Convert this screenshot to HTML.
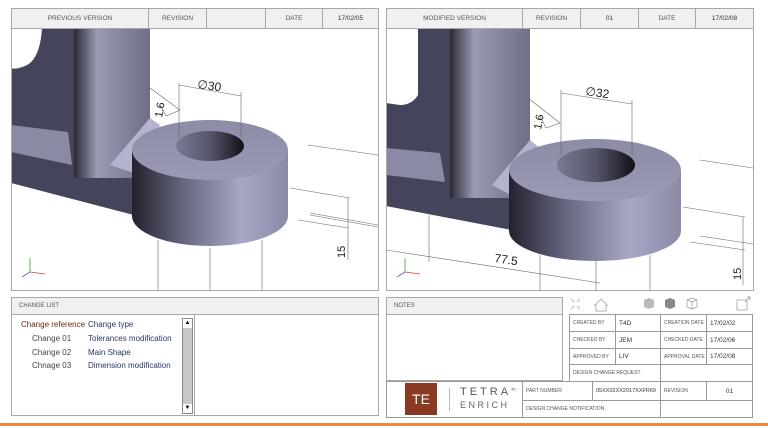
<!DOCTYPE html><html><head><meta charset="utf-8"><style>
*{margin:0;padding:0;box-sizing:border-box}
body{width:768px;height:428px;background:#fff;position:relative;overflow:hidden;font-family:"Liberation Sans",sans-serif}
.a{position:absolute}
.c{position:absolute;border:1px solid #a8a8a8;font-size:6.5px;color:#555;display:flex;align-items:center;justify-content:center;text-transform:uppercase;white-space:nowrap}
.h{background:#f0f0f0}
.t{position:absolute;border:1px solid #999;font-size:5px;color:#555;display:flex;align-items:center;padding-left:3px;white-space:nowrap;overflow:hidden}
.v{font-size:6.5px;color:#333}
.ln{font-size:8px;color:#444;position:absolute;white-space:nowrap}
</style></head><body>
<svg class="a" style="left:0;top:0" width="768" height="428">
<defs>
<linearGradient id="side" x1="0" x2="1"><stop offset="0" stop-color="#22222e"/><stop offset=".35" stop-color="#6a6a84"/><stop offset=".7" stop-color="#a8a8c6"/><stop offset="1" stop-color="#8a8aa6"/></linearGradient>
<linearGradient id="top" x1="0" y1="0" x2="0" y2="1"><stop offset="0" stop-color="#8c8ca6"/><stop offset="1" stop-color="#9a9ab6"/></linearGradient>
<linearGradient id="hole" x1="0" x2="1"><stop offset="0" stop-color="#7a7a96"/><stop offset=".5" stop-color="#55556a"/><stop offset="1" stop-color="#111118"/></linearGradient>
<linearGradient id="arm" x1="0" x2="1"><stop offset="0" stop-color="#2a2a36"/><stop offset=".3" stop-color="#9a9ab4"/><stop offset="1" stop-color="#6e6e86"/></linearGradient>
</defs>
<!-- LEFT -->
<polygon points="11,28 150,28 150,170 145,218 11,183" fill="#44445a"/>
<path d="M11,28 L42,28 Q40,60 25,66 Q15,70 11,68 Z" fill="#fff"/>
<polygon points="11,125 68,132 72,165 11,152" fill="#8a8aa4"/>
<rect x="74" y="28" width="76" height="150" fill="url(#arm)"/>
<polygon points="110,165 150,118 160,125 140,175" fill="#b4b4d0"/>
<rect x="132" y="150" width="156" height="66" fill="url(#side)"/>
<ellipse cx="210" cy="216" rx="78" ry="30" fill="url(#side)"/>
<ellipse cx="210" cy="150" rx="78" ry="30" fill="url(#top)"/>
<ellipse cx="210" cy="146" rx="34" ry="15" fill="url(#hole)"/>
<g stroke="#666" stroke-width=".6" fill="none">
<line x1="179" y1="83" x2="179" y2="137"/><line x1="241" y1="92" x2="241" y2="137"/><line x1="179" y1="85" x2="241" y2="96"/>
<polyline points="150,88 180,110 166,116 160,105"/>
<line x1="308" y1="145" x2="378" y2="155"/><line x1="290" y1="188" x2="350" y2="198"/><line x1="298" y1="220" x2="348" y2="228"/>
<line x1="348" y1="198" x2="348" y2="260"/><line x1="310" y1="213" x2="378" y2="225"/><line x1="310" y1="215" x2="378" y2="227"/>
<line x1="158" y1="240" x2="158" y2="290"/><line x1="210" y1="248" x2="210" y2="290"/><line x1="262" y1="240" x2="262" y2="290"/>
</g>
<text x="197" y="88" font-size="12" fill="#222" transform="rotate(8 197 88)" font-family="Liberation Sans">∅30</text>
<text x="162" y="118" font-size="11" fill="#222" transform="rotate(-80 162 118)">1.6</text>
<text x="345" y="258" font-size="11" fill="#222" transform="rotate(-90 345 258)">15</text>
<g stroke-width=".8"><line x1="30" y1="272" x2="30" y2="258" stroke="#3a3"/><line x1="30" y1="272" x2="45" y2="274" stroke="#c44"/><line x1="30" y1="272" x2="22" y2="277" stroke="#55c"/></g>
<!-- RIGHT -->
<polygon points="386,28 530,28 530,190 522,232 386,206" fill="#44445a"/>
<path d="M386,28 L418,28 L418,95 Q412,105 400,105 L386,103 Z" fill="#fff"/>
<polygon points="386,148 440,153 445,182 386,175" fill="#8a8aa4"/>
<rect x="450" y="28" width="80" height="170" fill="url(#arm)"/>
<polygon points="492,185 530,140 540,148 520,200" fill="#b4b4d0"/>
<rect x="509" y="170" width="172" height="61" fill="url(#side)"/>
<ellipse cx="595" cy="231" rx="86" ry="30" fill="url(#side)"/>
<ellipse cx="595" cy="170" rx="86" ry="31" fill="url(#top)"/>
<ellipse cx="596" cy="165" rx="39" ry="17" fill="url(#hole)"/>
<g stroke="#666" stroke-width=".6" fill="none">
<line x1="561" y1="90" x2="561" y2="155"/><line x1="632" y1="100" x2="632" y2="155"/><line x1="561" y1="93" x2="632" y2="104"/>
<polyline points="528,98 560,123 546,128 540,116"/>
<line x1="700" y1="160" x2="753" y2="168"/><line x1="683" y1="207" x2="745" y2="217"/><line x1="690" y1="242" x2="745" y2="250"/>
<line x1="743" y1="217" x2="743" y2="285"/><line x1="700" y1="236" x2="753" y2="244"/>
<line x1="429" y1="215" x2="429" y2="262"/><line x1="386" y1="250" x2="600" y2="283"/>
<line x1="540" y1="255" x2="540" y2="290"/><line x1="596" y1="260" x2="596" y2="290"/><line x1="650" y1="255" x2="650" y2="290"/>
</g>
<text x="585" y="95" font-size="12" fill="#222" transform="rotate(8 585 95)">∅32</text>
<text x="541" y="130" font-size="11" fill="#222" transform="rotate(-80 541 130)">1.6</text>
<text x="494" y="262" font-size="12" fill="#222" transform="rotate(8 494 262)">77.5</text>
<text x="741" y="280" font-size="11" fill="#222" transform="rotate(-90 741 280)">15</text>
<g stroke-width=".8"><line x1="405" y1="272" x2="405" y2="258" stroke="#3a3"/><line x1="405" y1="272" x2="420" y2="274" stroke="#c44"/><line x1="405" y1="272" x2="397" y2="277" stroke="#55c"/></g>
<!-- toolbar icons -->
<g stroke="#999" stroke-width=".7" fill="none">
<path d="M571,299l3,3M580,299l-3,3M571,309l3,-3M580,309l-3,-3"/>
<path d="M594,306l7,-7l7,7M596,304v7h10v-7"/>
<path d="M687,300l5,-2l5,2v7l-5,2l-5,-2z M687,300l5,2l5,-2M692,302v7"/>
<rect x="737" y="300" width="10" height="10"/><path d="M745,302l5,-5M747,297h3v3"/>
</g>
<path d="M644,300l5,-2l5,2v7l-5,2l-5,-2z" fill="#bbb"/>
<path d="M665,300l5,-2l5,2v7l-5,2l-5,-2z" fill="#888"/>
<rect x="0" y="423" width="768" height="3" fill="#ea8a3c"/>
</svg>
<!-- frames -->
<div class="a" style="left:11px;top:28px;width:368px;height:263px;border:1px solid #aaa;border-top:none"></div>
<div class="a" style="left:386px;top:28px;width:368px;height:263px;border:1px solid #aaa;border-top:none"></div>
<div class="c h" style="left:11px;top:8px;width:138px;height:21px">Previous version</div>
<div class="c h" style="left:148px;top:8px;width:59px;height:21px">Revision</div>
<div class="c h" style="left:206px;top:8px;width:60px;height:21px"></div>
<div class="c h" style="left:265px;top:8px;width:58px;height:21px">Date</div>
<div class="c h" style="left:322px;top:8px;width:57px;height:21px;color:#333">17/02/05</div>
<div class="c h" style="left:386px;top:8px;width:137px;height:21px">Modified version</div>
<div class="c h" style="left:522px;top:8px;width:59px;height:21px">Revision</div>
<div class="c h" style="left:580px;top:8px;width:59px;height:21px;color:#333">01</div>
<div class="c h" style="left:638px;top:8px;width:58px;height:21px">Date</div>
<div class="c h" style="left:695px;top:8px;width:59px;height:21px;color:#333">17/02/08</div>
<!-- change list -->
<div class="a" style="left:11px;top:297px;width:368px;height:119px;border:1px solid #aaa"></div>
<div class="c h" style="left:11px;top:297px;width:368px;height:18px;justify-content:flex-start;padding-left:7px;font-size:6px">Change list</div>
<div class="a" style="left:194px;top:314px;width:1px;height:101px;background:#aaa"></div>
<div class="a" style="left:182px;top:318px;width:11px;height:96px;background:#c8c8c8;border:1px solid #888"></div>
<div class="a" style="left:183px;top:319px;width:9px;height:9px;background:#fff;font-size:6px;text-align:center;line-height:9px">▲</div>
<div class="a" style="left:183px;top:404px;width:9px;height:9px;background:#fff;font-size:6px;text-align:center;line-height:9px">▼</div>
<div class="ln" style="left:21px;top:320px;color:#6a2a14">Change reference</div>
<div class="ln" style="left:88px;top:320px;color:#2a3668">Change type</div>
<div class="ln" style="left:32px;top:334px">Change 01</div><div class="ln" style="left:88px;top:334px;color:#2a3668">Tolerances modification</div>
<div class="ln" style="left:32px;top:348px">Change 02</div><div class="ln" style="left:88px;top:348px;color:#2a3668">Main Shape</div>
<div class="ln" style="left:32px;top:361px">Chnage 03</div><div class="ln" style="left:88px;top:361px;color:#2a3668">Dimension modification</div>
<!-- notes -->
<div class="a" style="left:386px;top:297px;width:177px;height:84px;border:1px solid #aaa"></div>
<div class="c h" style="left:386px;top:297px;width:177px;height:18px;justify-content:flex-start;padding-left:7px;font-size:6px">Notes</div>
<!-- table -->
<div class="t" style="left:569px;top:314px;width:47px;height:18px">CREATED BY</div>
<div class="t v" style="left:615px;top:314px;width:46px;height:18px">T4D</div>
<div class="t" style="left:660px;top:314px;width:47px;height:18px">CREATION DATE</div>
<div class="t v" style="left:706px;top:314px;width:47px;height:18px">17/02/02</div>
<div class="t" style="left:569px;top:331px;width:47px;height:18px">CHECKED BY</div>
<div class="t v" style="left:615px;top:331px;width:46px;height:18px">JEM</div>
<div class="t" style="left:660px;top:331px;width:47px;height:18px">CHECKED DATE</div>
<div class="t v" style="left:706px;top:331px;width:47px;height:18px">17/02/06</div>
<div class="t" style="left:569px;top:348px;width:47px;height:17px">APPROVED BY</div>
<div class="t v" style="left:615px;top:348px;width:46px;height:17px">LIV</div>
<div class="t" style="left:660px;top:348px;width:47px;height:17px">APPROVAL DATE</div>
<div class="t v" style="left:706px;top:348px;width:47px;height:17px">17/02/08</div>
<div class="t" style="left:569px;top:364px;width:92px;height:18px">DESIGN CHANGE REQUEST</div>
<div class="t" style="left:660px;top:364px;width:93px;height:18px"></div>
<div class="t" style="left:386px;top:381px;width:137px;height:37px"></div>
<div class="t" style="left:522px;top:381px;width:71px;height:20px">PART NUMBER</div>
<div class="t v" style="left:592px;top:381px;width:69px;height:20px;font-size:5.5px">05XX02XX2017XXFR69</div>
<div class="t" style="left:660px;top:381px;width:47px;height:20px">REVISION</div>
<div class="t v" style="left:706px;top:381px;width:47px;height:20px;justify-content:center;padding:0">01</div>
<div class="t" style="left:522px;top:400px;width:139px;height:18px">DESIGN CHANGE NOTIFICATION</div>
<div class="t" style="left:660px;top:400px;width:93px;height:18px"></div>
<div class="a" style="left:405px;top:383px;width:32px;height:32px;background:#8a3a22;color:#fff;font-size:14px;display:flex;align-items:center;justify-content:center">TE</div>
<div class="a" style="left:449px;top:388px;width:1px;height:23px;background:#bbb"></div>
<div class="a" style="left:460px;top:386px;font-size:11px;letter-spacing:3px;color:#555;white-space:nowrap">TETRA<sup style="font-size:4px;letter-spacing:0">4D</sup></div>
<div class="a" style="left:460px;top:400px;font-size:9px;letter-spacing:2.5px;color:#666">ENRICH</div>
</body></html>
